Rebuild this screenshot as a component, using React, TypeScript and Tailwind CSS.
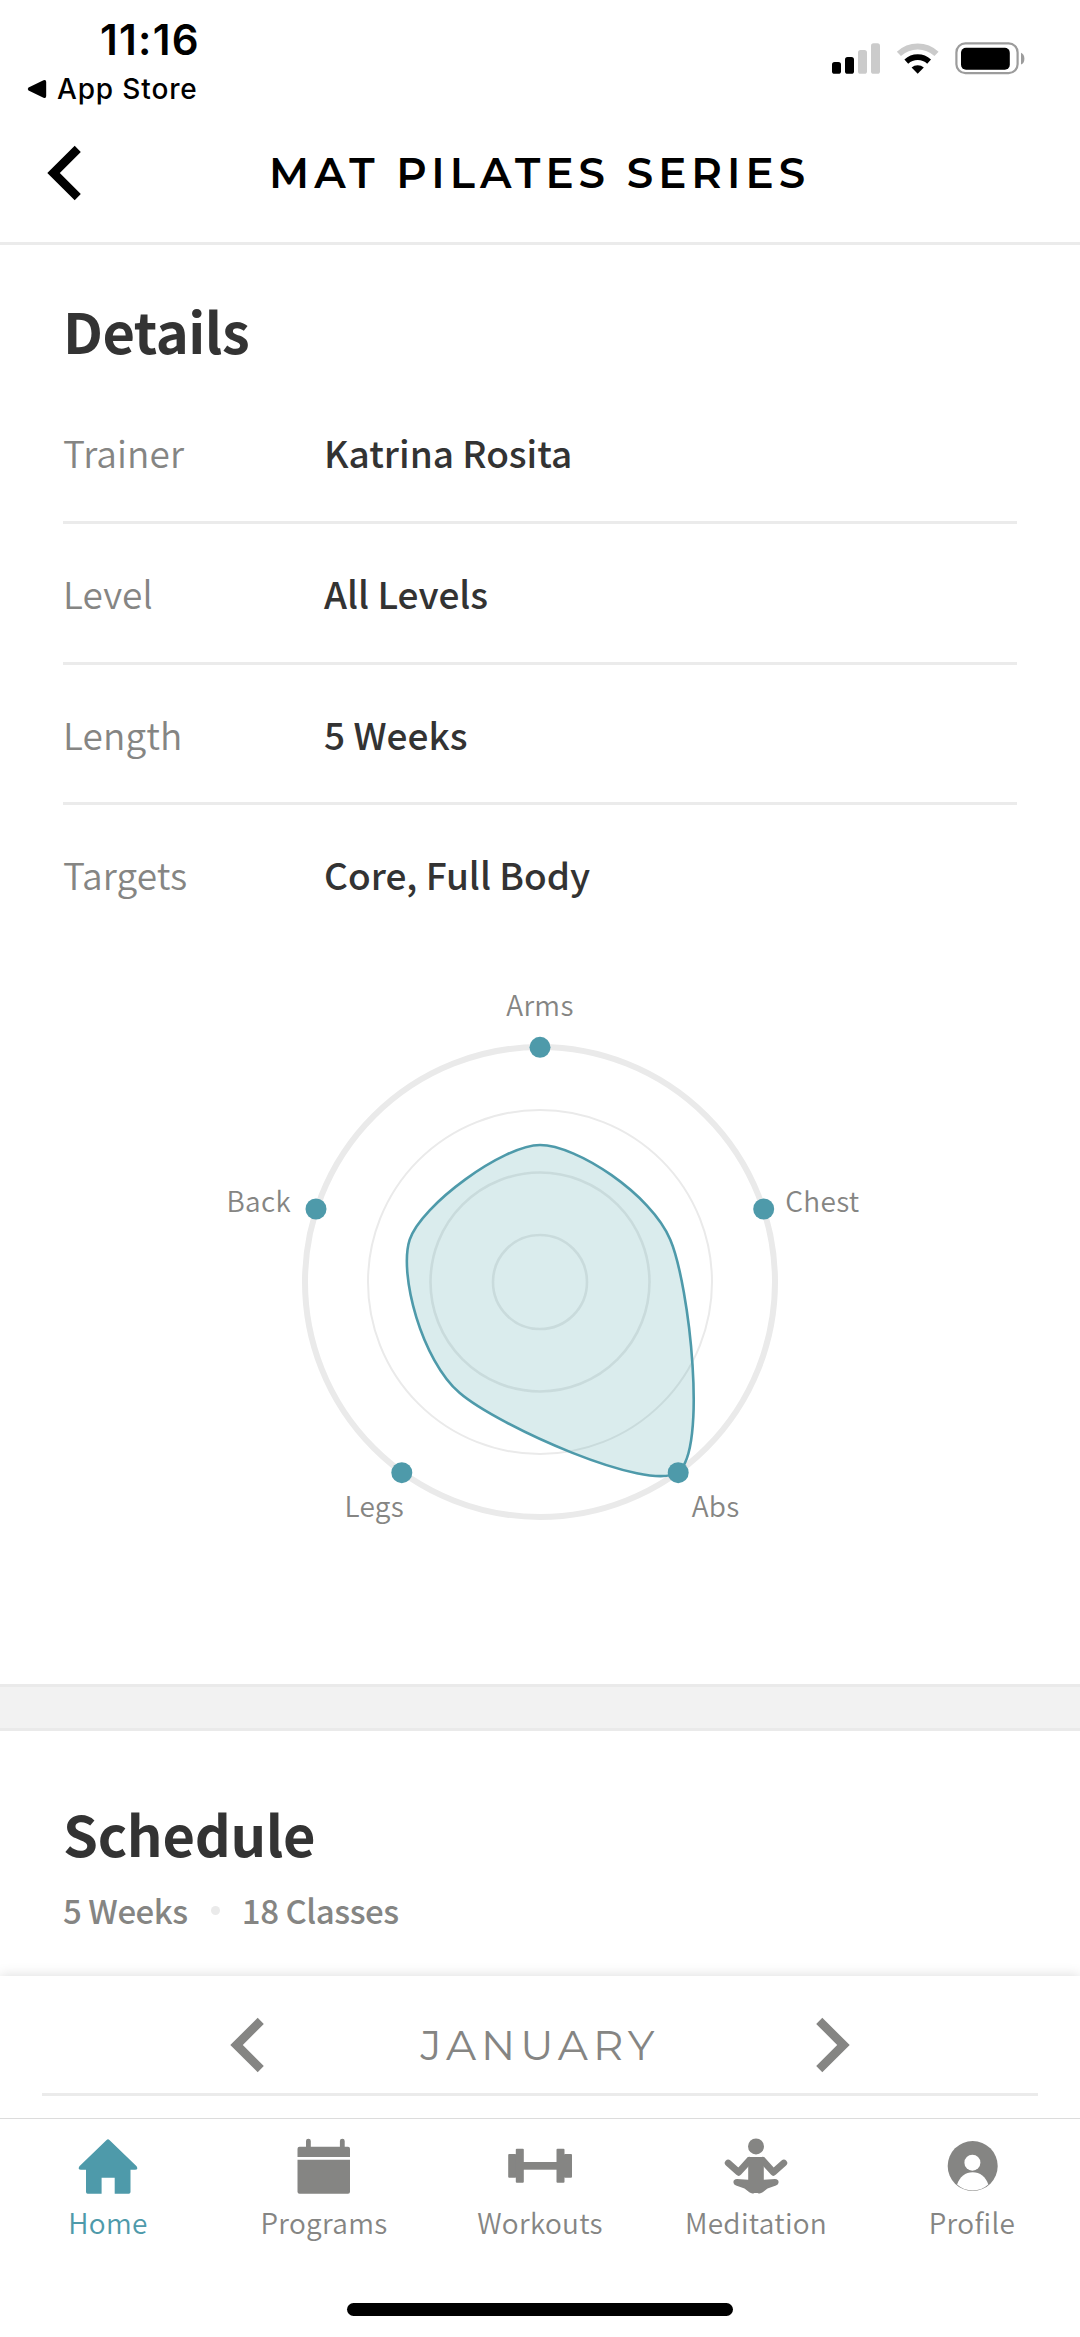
import type { ReactNode } from "react";

const SANS = "font-['Noto_Sans_CJK_JP','Noto_Sans',sans-serif]";
const DISPLAY = "font-['Montserrat','Inter',sans-serif]";
const SYSTEM = "font-['Inter','Liberation_Sans',sans-serif]";

function StatusIcons() {
  return (
    <svg className="mt-10 mr-[54px] h-[38px] w-[196px]" viewBox="830 40 196 38">
      <rect x="832" y="62" width="9" height="11.8" rx="2.6" />
      <rect x="845" y="57" width="9" height="16.8" rx="2.6" />
      <rect x="858" y="50" width="9" height="23.8" rx="2.6" fill="#cbcbcb" />
      <rect x="871" y="43.2" width="9" height="30.6" rx="2.6" fill="#cbcbcb" />
      <path d="M898.9 53.9A27.5 27.5 0 0 1 936.5 53.9" fill="none" stroke="#cbcbcb" strokeWidth="6" />
      <path d="M906.3 61.6A16.8 16.8 0 0 1 929.1 61.6" fill="none" stroke="#000" strokeWidth="5.6" />
      <path d="M917.7 73.8L911.6 67.6A8.8 8.8 0 0 1 923.8 67.6Z" />
      <rect x="956.4" y="43.4" width="61.2" height="29.8" rx="9" fill="none" stroke="#9c9c9c" strokeWidth="2.2" />
      <rect x="961" y="47.7" width="48.8" height="22" rx="5" />
      <path d="M1021 52.8Q1024.4 54.4 1024.4 58.7T1021 64.6Z" fill="#9c9c9c" />
    </svg>
  );
}

function Chevron({ flip = false }: { flip?: boolean }) {
  return (
    <svg className={flip ? "h-[56px] w-[34px] -scale-x-100" : "h-[56px] w-[34px]"} viewBox="0 0 34 56">
      <path d="M27.7 0.8L33.8 6.9L12.8 28L33.8 49.1L27.7 55.2L0.3 28Z" fill="currentColor" />
    </svg>
  );
}

const CX = 540;
const dots = [
  [540, 1047.3],
  [763.7, 1209],
  [678.2, 1472.7],
  [401.8, 1472.7],
  [316, 1209],
];
const shape = [
  [540, 1145],
  [670.3, 1239.7],
  [678.1, 1472],
  [459.5, 1392.8],
  [409.7, 1239.7],
];

/* Closed cardinal spline through the given points. */
function spline(p: number[][], k: number) {
  const n = p.length;
  let d = `M${p[0][0]} ${p[0][1]}`;
  for (let i = 0; i < n; i++) {
    const a = p[(i + n - 1) % n];
    const b = p[i];
    const c = p[(i + 1) % n];
    const e = p[(i + 2) % n];
    d += `C${b[0] + (c[0] - a[0]) * k} ${b[1] + (c[1] - a[1]) * k} ${c[0] - (e[0] - b[0]) * k} ${c[1] - (e[1] - b[1]) * k} ${c[0]} ${c[1]}`;
  }
  return d + "Z";
}

function TargetChart() {
  return (
    <svg className="h-[741px] w-[1080px]" viewBox="0 943 1080 741">
      <g fill="none" stroke="#eaeaea">
        <circle cx={CX} cy="1282" r="235" strokeWidth="6" />
        <circle cx={CX} cy="1282" r="172" strokeWidth="2" />
        <circle cx={CX} cy="1282" r="109.5" strokeWidth="2.6" />
        <circle cx={CX} cy="1282" r="47" strokeWidth="2.6" />
      </g>
      <path d={spline(shape, 0.14)} fill="#4ea4ac" fillOpacity="0.21" stroke="#4e9aaa" strokeWidth="2.6" />
      {dots.map(([x, y]) => (
        <circle key={`${x}-${y}`} cx={x} cy={y} r="10.5" fill="#4e9aaa" />
      ))}
      <g className={`${SANS} text-[28px] font-[350]`} fill="#858583">
        <text x="540" y="1016" textAnchor="middle" letterSpacing="0.3">Arms</text>
        <text x="785.3" y="1212" letterSpacing="0.3">Chest</text>
        <text x="691.7" y="1517" letterSpacing="0.3">Abs</text>
        <text x="404" y="1517" textAnchor="end" letterSpacing="0.3">Legs</text>
        <text x="291" y="1212" textAnchor="end" letterSpacing="0.3">Back</text>
      </g>
    </svg>
  );
}

const details = [
  ["Trainer", "Katrina Rosita", "h-[141px] border-b-[3px]"],
  ["Level", "All Levels", "h-[141px] border-b-[3px]"],
  ["Length", "5 Weeks", "h-[140px] border-b-[3px]"],
  ["Targets", "Core, Full Body", "h-[138px]"],
];

const icons: Record<string, ReactNode> = {
  Home: (
    <path d="M30.6 5.9Q32 4.7 33.4 5.9L60.6 32.2Q62.6 35.7 59 35.7H54.5V58Q54.5 59.7 52.8 59.7H38.7V43.7H25.6V59.7H11.7Q10 59.7 10 58V35.7H5Q1.4 35.7 3.4 32.2Z" />
  ),
  Programs: (
    <>
      <path d="M5.5 23V14.7Q5.5 12.7 7.5 12.7H14V7Q14 4.7 16.4 4.7T18.8 7V12.7H47.9V7Q47.9 4.7 50.3 4.7T52.7 7V12.7H56Q58 12.7 58 14.7V23Z" />
      <path d="M5.5 25.8H58V57.7Q58 59.7 56 59.7H7.5Q5.5 59.7 5.5 57.7Z" />
    </>
  ),
  Workouts: (
    <>
      <rect x="0.2" y="20" width="8" height="23.8" rx="1" />
      <rect x="7.8" y="14.7" width="8" height="34" rx="1" />
      <rect x="15" y="28" width="34" height="7.7" />
      <rect x="48.5" y="14.7" width="8" height="34" rx="1" />
      <rect x="56" y="20" width="8" height="23.8" rx="1" />
    </>
  ),
  Meditation: (
    <>
      <circle cx="32" cy="12.4" r="8" />
      <path d="M4.2 29L14.6 38.3L25.4 26.4M59.8 29L49.4 38.3L38.6 26.4" fill="none" stroke="currentColor" strokeWidth="6.8" strokeLinecap="round" strokeLinejoin="round" />
      <path d="M25 23H39Q41 23 41 25L39.8 30V45.8L51 45Q54.6 45.2 54.6 48.2Q54.6 50.6 52 51.4L43.5 54.6L38.7 58.3Q36 60.2 33.6 58.9H30.4Q28 60.2 25.3 58.3L20.5 54.6L12 51.4Q9.4 50.6 9.4 48.2Q9.4 45.2 13 45L24.2 45.8V30L23 25Q23 23 25 23Z" />
    </>
  ),
  Profile: (
    <>
      <circle cx="32.7" cy="32" r="25" />
      <circle cx="32.4" cy="28.7" r="8" fill="#fff" />
      <path d="M17.1 50.5C19.5 42.8 25.5 38.2 32.7 38.2S45.9 42.8 48.3 50.5C44.2 54.4 38.8 56.4 32.7 56.4S21.2 54.4 17.1 50.5Z" fill="#fff" />
    </>
  ),
};

export default function App() {
  return (
    <div className={`${SANS} flex h-[2337px] w-[1080px] flex-col overflow-hidden bg-white text-[#333]`}>
      <header className="h-[245px] shrink-0 border-b-[3px] border-[#ebebeb] text-black">
        <div className={`${SYSTEM} flex h-[109px] justify-between`}>
          <div>
            <div className="mt-4 ml-[100px] text-[42px] leading-[48px] font-semibold tracking-[1.3px]">11:16</div>
            <div className="mt-[5px] ml-[27px] flex items-center text-[28px] leading-[40px] font-medium tracking-[0.85px]">
              <svg className="mr-[10px] h-5 w-5" viewBox="0 0 20 20">
                <path d="M1.5 8.6L16.5 1.2Q19.2 0.2 19.2 3V17Q19.2 19.8 16.5 18.8L1.5 11.4Q0 10 1.5 8.6Z" />
              </svg>
              App Store
            </div>
          </div>
          <StatusIcons />
        </div>
        <div className="flex h-[128px] items-center pl-[47px]">
          <Chevron />
          <h1 className={`${DISPLAY} ml-[188px] text-[42px] leading-[52px] font-semibold tracking-[5.05px] whitespace-nowrap`}>
            MAT PILATES SERIES
          </h1>
        </div>
      </header>

      <section className="h-[1439px] shrink-0 pt-[45px]">
        <h2 className="mb-[13px] ml-[63px] text-[56px] leading-[80px] font-bold tracking-[-0.5px]">Details</h2>
        <dl className="mx-[63px]">
          {details.map(([label, value, box]) => (
            <div key={label} className={`${box} flex items-center border-[#ebebeb] text-[37px] leading-[54px]`}>
              <dt className="w-[261px] font-[350] tracking-[0.1px] text-[#858583]">{label}</dt>
              <dd className="font-medium">{value}</dd>
            </div>
          ))}
        </dl>
        <TargetChart />
      </section>

      <div className="h-[47px] shrink-0 border-y-[3px] border-[#eaeaea] bg-[#f2f2f2]" />

      <section className="h-[245px] shrink-0 pt-[62px] pl-[63px]">
        <h2 className="text-[56px] leading-[80px] font-bold tracking-[-0.3px]">Schedule</h2>
        <div className="mt-[13px] flex items-center text-[33px] leading-[48px] font-medium tracking-[-0.45px] text-[#858583]">
          <span>5 Weeks</span>
          <span className="mr-[22px] ml-[23px] size-[9px] rounded-full bg-[#eaeaea]" />
          <span>18 Classes</span>
        </div>
      </section>

      <section className="h-[142px] shrink-0 bg-white px-[42px] pt-[21px] text-[#858583] shadow-[0_-1px_12px_rgba(0,0,0,0.13)]">
        <div className="flex h-[99px] items-center justify-between border-b-[3px] border-[#ebebeb] px-[188px]">
          <Chevron />
          <span className={`${DISPLAY} text-[42px] leading-[52px] font-normal tracking-[5px]`}>JANUARY</span>
          <Chevron flip />
        </div>
      </section>

      <nav className="relative grid grow grid-cols-5 border-t border-[#dcdcdc] bg-white pt-[15px]">
        {Object.keys(icons).map((name) => (
          <div key={name} className={name === "Home" ? "flex flex-col items-center text-[#4e9aaa]" : "flex flex-col items-center text-[#858583]"}>
            <svg className="size-16" viewBox="0 0 64 64" fill="currentColor">
              {icons[name]}
            </svg>
            <span className="mt-1 text-[28px] leading-[40px] font-[350] tracking-[0.3px]">{name}</span>
          </div>
        ))}
        <div className="absolute bottom-[21px] left-[347px] h-[13px] w-[386px] rounded-full bg-black" />
      </nav>
    </div>
  );
}
